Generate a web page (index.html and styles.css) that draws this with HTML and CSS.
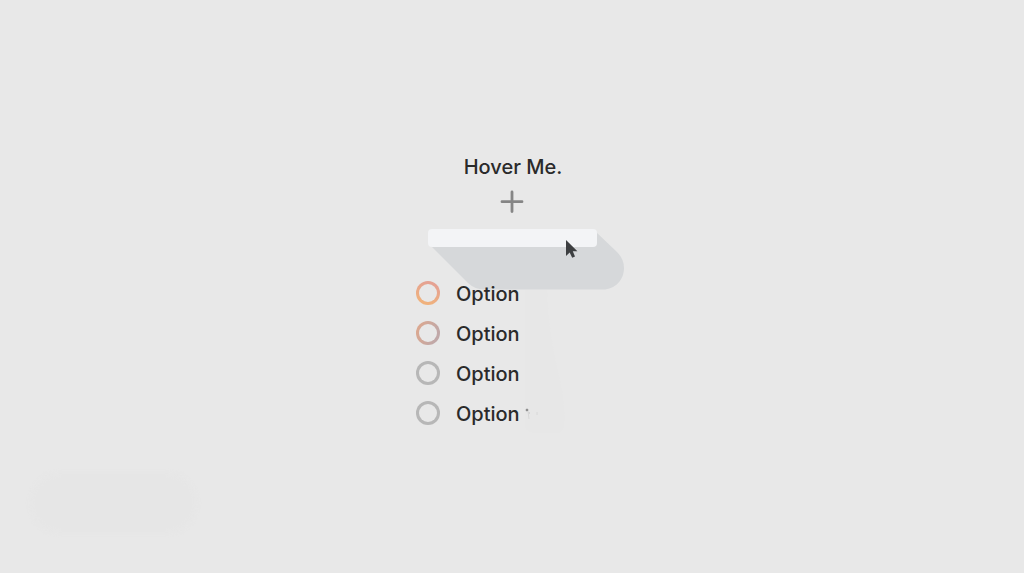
FILE: index.html
```html
<!DOCTYPE html>
<html lang="en">
<head>
  <meta charset="UTF-8">
  <meta name="viewport" content="width=device-width, initial-scale=1.0">
  <title>Hover Me</title>
  <link rel="stylesheet" href="styles.css">
</head>
<body>
  <main class="menu">
    <h1>Hover Me.</h1>
    <button class="plus" type="button" aria-label="Add">
      <svg width="24" height="24" viewBox="0 0 24 24">
        <path d="M12 2v19.500M2 11.700h20" stroke="#858585" stroke-width="2.8" stroke-linecap="round"/>
      </svg>
    </button>
    <div class="bar-wrap">
      <svg class="bar-shadow" width="200" height="64" viewBox="0 0 200 64">
        <path d="M1 15L40 54Q47 60.500 56 60.500H175C187 60.500 196 51 196 39C196 32 193 27 189 23L168 3L150 8Z" fill="#d6d8da"/>
      </svg>
      <button class="bar" type="button" aria-label="Open menu"></button>
      <svg class="cursor" width="14" height="20" viewBox="0 0 14 20">
        <path d="M1 1V17L4.700 13.500L7.200 18.800L10 17.500L7.800 12.300H12.400Z" fill="#3d3f41"/>
      </svg>
    </div>
    <form class="options">
      <label><input class="orange" type="radio" name="option"><span>Option</span></label>
      <label><input class="rose" type="radio" name="option"><span>Option</span></label>
      <label><input type="radio" name="option"><span>Option</span></label>
      <label><input type="radio" name="option"><span>Option</span></label>
      <svg class="trail" width="48" height="144" viewBox="0 0 48 144">
        <path d="M2 0H24C25 36 31 65 38 96C42 117 45 143 34 143H12Q2 143 2 132Z" fill="#e7e7e7"/>
        <path d="M3 119h2v2h-2zM6 122v2" fill="#777" stroke="#aaa" stroke-width=".6"/>
        <path d="M5 121l1 8M14 122v3" stroke="#d8d8d8" stroke-width="1"/>
      </svg>
    </form>
  </main>
  <div class="pill"></div>
</body>
</html>
```

FILE: styles.css
```css
* {
  box-sizing: border-box;
}
body {
  display: flex;
  align-items: center;
  justify-content: center;
  min-height: 100vh;
  margin: 0;
  padding-top: 14px;
  background-color: #e8e8e8;
  color: #2a2a2a;
  font-family: Inter, 'Liberation Sans', sans-serif;
}
.menu {
  display: flex;
  flex-direction: column;
  align-items: center;
  width: 192px;
}
h1 {
  margin: 0 0 10px;
  padding-left: 2px;
  font-size: 20px;
  font-weight: 450;
  line-height: 26px;
}
button {
  padding: 0;
  border: none;
  cursor: pointer;
}
.plus {
  height: 24px;
  background: none;
}
.plus svg {
  display: block;
}
.bar-wrap {
  position: relative;
  width: 169px;
  height: 18px;
  margin: 15px 0 26px;
}
.bar {
  position: relative;
  display: block;
  width: 100%;
  height: 100%;
  border-radius: 4px;
  background-color: #f3f4f6;
}
/* long shadow cast down and to the right */
.bar-shadow {
  position: absolute;
  top: 0;
  left: 0;
}
.cursor {
  position: absolute;
  top: 10px;
  right: 18px;
}
.options {
  position: relative;
  width: 100%;
}
.options label {
  position: relative;
  z-index: 1;
  display: flex;
  align-items: center;
  gap: 16px;
  height: 40px;
  font-size: 20px;
  font-weight: 450;
}
.options span {
  padding-top: 2px;
}
.options input {
  appearance: none;
  width: 24px;
  height: 24px;
  margin: 0;
  border: 3px solid transparent;
  border-radius: 50%;
  background: linear-gradient(#e8e8e8, #e8e8e8) padding-box, linear-gradient(#b7b7b7, #b7b7b7) border-box;
}
.options .orange {
  background: linear-gradient(#e8e8e8, #e8e8e8) padding-box, linear-gradient(20deg, #f0b27c 15%, #e5a292 80%) border-box;
}
.options .rose {
  background: linear-gradient(#e8e8e8, #e8e8e8) padding-box, linear-gradient(110deg, #e0a88c, #c0a8a8 80%) border-box;
}
.trail {
  position: absolute;
  top: 17px;
  left: 107px;
}
.pill {
  position: absolute;
  bottom: 40px;
  left: 30px;
  width: 167px;
  height: 60px;
  border-radius: 30px;
  background-color: #e6e6e6;
  filter: blur(2px);
}
```
